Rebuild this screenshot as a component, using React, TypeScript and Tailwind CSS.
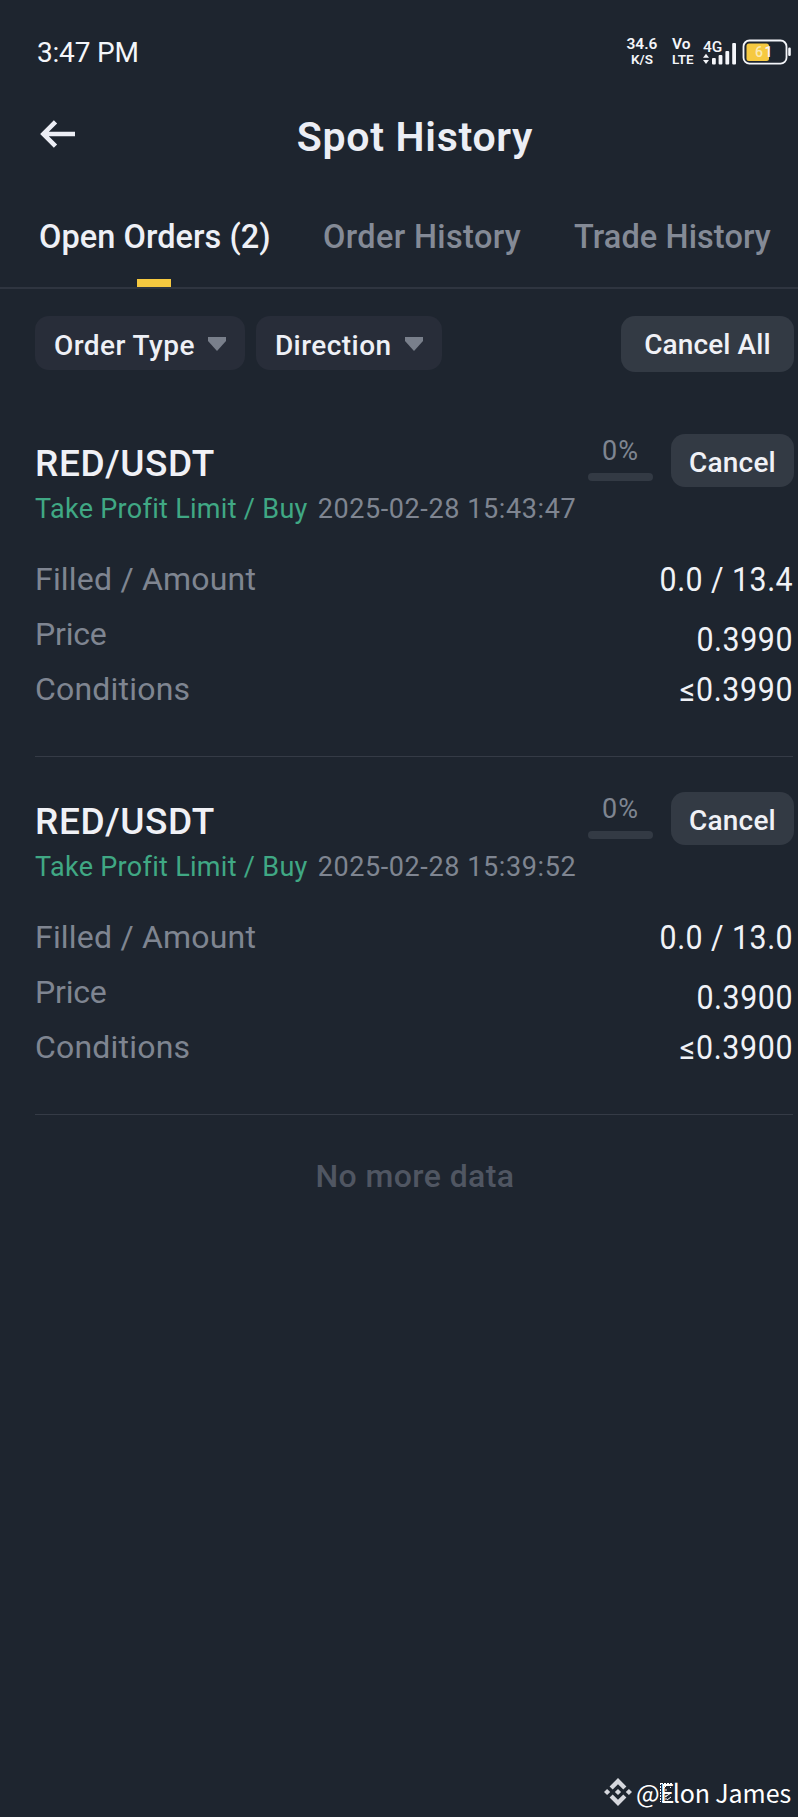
interface Order {
  pair: string
  type: string
  time: string
  progress: string
  filled: string
  price: string
  condition: string
}

const orders: Order[] = [
  {
    pair: 'RED/USDT',
    type: 'Take Profit Limit / Buy',
    time: '2025-02-28 15:43:47',
    progress: '0%',
    filled: '0.0 / 13.4',
    price: '0.3990',
    condition: '≤0.3990',
  },
  {
    pair: 'RED/USDT',
    type: 'Take Profit Limit / Buy',
    time: '2025-02-28 15:39:52',
    progress: '0%',
    filled: '0.0 / 13.0',
    price: '0.3900',
    condition: '≤0.3900',
  },
]

function StatusBar() {
  return (
    <div className="flex h-[104px] items-center justify-between pl-[37px] pr-[7px] text-[#f4f6fa]">
      <span className="pt-0.5 text-[28px] leading-9 tracking-[-0.2px]">3:47 PM</span>
      <div className="flex items-center font-semibold">
        <div className="-mt-[2px] flex w-[34px] flex-col items-center whitespace-nowrap">
          <span className="text-[15.5px] leading-[16px]">34.6</span>
          <span className="text-[13.5px] leading-[14px]">K/S</span>
        </div>
        <div className="-mt-[2px] ml-[13px] flex w-[25px] flex-col">
          <span className="text-[15.5px] leading-[16px]">Vo</span>
          <span className="text-[13.5px] leading-[14px]">LTE</span>
        </div>
        <svg className="ml-[6px] h-[26px] w-[35px] overflow-visible" viewBox="0 0 35 26" fill="currentColor">
          <text x="0" y="12.5" fontSize="15.5" fontWeight="500">4G</text>
          <path d="M3 14.8l3 3.9H0zM3 25l3-3.9H0z" />
          <rect x="9" y="19" width="3.8" height="6.5" rx="1" />
          <rect x="15.6" y="16" width="3.8" height="9.5" rx="1" />
          <rect x="22.4" y="12" width="3.8" height="13.5" rx="1" />
          <rect x="29.2" y="4" width="3.8" height="21.5" rx="1" />
        </svg>
        <svg className="ml-[4px] h-[26px] w-[49px]" viewBox="0 0 49 26">
          <rect x="1.5" y="1.5" width="43" height="23.2" rx="6" fill="none" stroke="currentColor" strokeWidth="1.8" />
          <rect x="4.5" y="4.5" width="22.5" height="17.5" rx="2.5" fill="#f6c940" />
          <text x="13" y="18" fontSize="14" fontWeight="500" fill="#fbe9b4">6</text>
          <text x="22.5" y="18" fontSize="14" fontWeight="500" fill="currentColor">1</text>
          <rect x="46.2" y="8.5" width="2.6" height="8.5" rx="1.2" fill="currentColor" />
        </svg>
      </div>
    </div>
  )
}

function Header() {
  return (
    <header className="grid h-[68px] grid-cols-[1fr_auto_1fr] items-center text-[#eceef5]">
      <svg className="-mt-[9px] ml-[40px] h-7 w-[35px]" viewBox="0 0 35 28" fill="none" stroke="currentColor" strokeWidth="4.6">
        <path d="M35 14H4M15.5 1.8L3.4 14l12.1 12.2" />
      </svg>
      <h1 className="-mt-0.5 ml-8 text-[41px] leading-[48px] font-semibold tracking-[0.7px]">Spot History</h1>
    </header>
  )
}

function Tabs() {
  return (
    <nav className="flex h-[117px] border-b-2 border-[#2f3540] pt-[45px] pl-[39px] text-[32.5px] leading-10 font-medium whitespace-nowrap text-[#848a96]">
      <div className="flex w-[284px] flex-col">
        <span className="tracking-[0.05px] text-[#eef0f6]">Open Orders (2)</span>
        <span className="mt-[22px] ml-[98px] h-2 w-[34px] bg-[#f6c940]" />
      </div>
      <span className="w-[251px] tracking-[0.35px]">Order History</span>
      <span className="tracking-[0.1px]">Trade History</span>
    </nav>
  )
}

function FilterChip({ label }: { label: string }) {
  return (
    <button className="flex h-[54px] items-center gap-[13px] rounded-[14px] bg-[#282d39] pt-[5px] pr-[19px] pl-[19px] text-[28px] font-medium tracking-[0.45px] whitespace-nowrap text-[#eef0f6]">
      {label}
      <svg className="-mt-1 h-[14px] w-[18px]" viewBox="0 0 18 14" fill="#797f8b">
        <path d="M0 0h18v4l-9 10L0 4z" />
      </svg>
    </button>
  )
}

function OrderCard({ order }: { order: Order }) {
  return (
    <article className="mb-[35px] h-[323px] border-b border-[#353b46]">
      <div className="flex justify-between">
        <div className="flex flex-col pt-[8px] whitespace-nowrap">
          <h2 className="text-[37px] leading-[44px] font-medium tracking-[0.6px] text-[#f0f1f6]">{order.pair}</h2>
          <p className="mt-[5px] flex gap-[10px] text-[27px] leading-9 text-[#7f8591]">
            <span className="tracking-[0.3px] text-[#40a884]">{order.type}</span>
            <span className="tracking-[0.6px]">{order.time}</span>
          </p>
        </div>
        <div className="-mr-px -ml-10 flex items-start">
          <div className="mr-[18px] flex w-[65px] flex-col items-center pt-[1px]">
            <span className="text-[27px] leading-8 tracking-[1px] text-[#7f8591]">{order.progress}</span>
            <span className="mt-[6px] h-[8px] w-full rounded-full bg-[#333a44]" />
          </div>
          <button className="h-[53px] w-[123px] rounded-[14px] bg-[#333a44] pt-[4px] text-[28px] font-medium tracking-[0.2px] text-[#f0f1f6]">
            Cancel
          </button>
        </div>
      </div>
      <dl className="mt-[25px] text-[32px] leading-[55px] text-[#7f8591]">
        <div className="flex justify-between">
          <dt className="tracking-[0.2px]">Filled / Amount</dt>
          <dd className="origin-right scale-x-[0.92] text-[33px] tracking-[0.5px] text-[#f0f2f7]">{order.filled}</dd>
        </div>
        <div className="flex justify-between">
          <dt className="tracking-[-0.2px]">Price</dt>
          <dd className="relative top-[5px] origin-right scale-x-[0.92] text-[33px] tracking-[0.6px] text-[#f0f2f7]">{order.price}</dd>
        </div>
        <div className="flex justify-between">
          <dt className="tracking-[0.2px]">Conditions</dt>
          <dd className="origin-right scale-x-[0.92] text-[33px] tracking-[0.7px] text-[#f0f2f7]">{order.condition}</dd>
        </div>
      </dl>
    </article>
  )
}

export default function App() {
  return (
    <div className="flex h-[1817px] w-[798px] flex-col overflow-hidden bg-[#1e252f] font-['Roboto',sans-serif]">
      <StatusBar />
      <Header />
      <Tabs />
      <div className="flex items-start pt-[27px] pr-[4px] pl-[35px]">
        <div className="flex gap-[11px]">
          <FilterChip label="Order Type" />
          <FilterChip label="Direction" />
        </div>
        <button className="ml-auto h-[56px] w-[173px] rounded-[14px] bg-[#333a44] pt-[2px] text-[28px] font-medium tracking-[0.1px] text-[#f0f1f6]">
          Cancel All
        </button>
      </div>
      <main className="pt-[62px] pr-[5px] pl-[35px]">
        {orders.map((order) => (
          <OrderCard key={order.time} order={order} />
        ))}
        <p className="pl-[2px] text-center text-[32px] leading-[52px] font-medium tracking-[0.4px] text-[#505662]">No more data</p>
      </main>
      <footer className="mt-auto flex h-[50px] items-center justify-end pr-[7px] text-white">
        <svg className="h-7 w-7" viewBox="0 0 28 28" fill="#d5d7dd">
          <path d="M14 0l8.4 8.4-3.1 3.1L14 6.2l-5.3 5.3-3.1-3.1zM14 28l8.4-8.4-3.1-3.1-5.3 5.3-5.3-5.3-3.1 3.1zM3.1 10.9L6.2 14l-3.1 3.1L0 14zM24.9 10.9L28 14l-3.1 3.1-3.1-3.1zM14 10.9l3.1 3.1-3.1 3.1-3.1-3.1z" />
        </svg>
        <span className="ml-1 flex font-['Noto_Sans_CJK_SC',sans-serif] text-[25px] leading-8 tracking-[-0.1px]">
          @
          <span className="relative w-[13px]">
            E
            <svg className="absolute top-[7px] left-0 h-[19px] w-3" viewBox="0 0 12 19" fill="none" stroke="currentColor">
              <path d="M.5 0v19M6 6v12M10.5 1v4M1 .5h11M2 18.5h9" strokeDasharray="2 1" />
              <path d="M3 6l5-5M5 14l6-4M7 17l4-3" />
            </svg>
          </span>
          lon James
        </span>
      </footer>
    </div>
  )
}
